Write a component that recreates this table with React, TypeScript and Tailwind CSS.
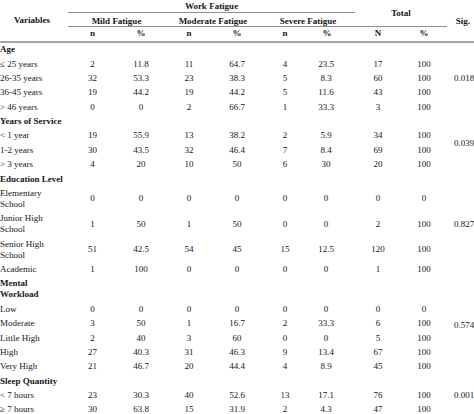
type Row = { label: string; v: string[] };
type Group = { title: string; sig: string; rows: Row[] };

const groups: Group[] = [
  {
    title: "Age",
    sig: "0.018",
    rows: [
      { label: "≤ 25 years", v: ["2", "11.8", "11", "64.7", "4", "23.5", "17", "100"] },
      { label: "26-35 years", v: ["32", "53.3", "23", "38.3", "5", "8.3", "60", "100"] },
      { label: "36-45 years", v: ["19", "44.2", "19", "44.2", "5", "11.6", "43", "100"] },
      { label: "> 46 years", v: ["0", "0", "2", "66.7", "1", "33.3", "3", "100"] },
    ],
  },
  {
    title: "Years of Service",
    sig: "0.039",
    rows: [
      { label: "< 1 year", v: ["19", "55.9", "13", "38.2", "2", "5.9", "34", "100"] },
      { label: "1-2 years", v: ["30", "43.5", "32", "46.4", "7", "8.4", "69", "100"] },
      { label: "> 3 years", v: ["4", "20", "10", "50", "6", "30", "20", "100"] },
    ],
  },
  {
    title: "Education Level",
    sig: "0.827",
    rows: [
      { label: "Elementary School", v: ["0", "0", "0", "0", "0", "0", "0", "0"] },
      { label: "Junior High School", v: ["1", "50", "1", "50", "0", "0", "2", "100"] },
      { label: "Senior High School", v: ["51", "42.5", "54", "45", "15", "12.5", "120", "100"] },
      { label: "Academic", v: ["1", "100", "0", "0", "0", "0", "1", "100"] },
    ],
  },
  {
    title: "Mental Workload",
    sig: "0.574",
    rows: [
      { label: "Low", v: ["0", "0", "0", "0", "0", "0", "0", "0"] },
      { label: "Moderate", v: ["3", "50", "1", "16.7", "2", "33.3", "6", "100"] },
      { label: "Little High", v: ["2", "40", "3", "60", "0", "0", "5", "100"] },
      { label: "High", v: ["27", "40.3", "31", "46.3", "9", "13.4", "67", "100"] },
      { label: "Very High", v: ["21", "46.7", "20", "44.4", "4", "8.9", "45", "100"] },
    ],
  },
  {
    title: "Sleep Quantity",
    sig: "0.001",
    rows: [
      { label: "< 7 hours", v: ["23", "30.3", "40", "52.6", "13", "17.1", "76", "100"] },
      { label: "≥ 7 hours", v: ["30", "63.8", "15", "31.9", "2", "4.3", "47", "100"] },
    ],
  },
];

const numCell = "py-[1.7px] leading-[11px] text-center align-middle font-normal";
const labelCell = "py-[1.7px] leading-[11px] text-left align-middle pr-[2px] pl-0";

function NumCells({ v }: { v: string[] }) {
  return (
    <>
      {v.map((x, i) => (
        <td key={i} className={i === 5 ? numCell + " pr-[12px]" : numCell}>
          {x}
        </td>
      ))}
    </>
  );
}

function EmptyCells() {
  return (
    <>
      {Array.from({ length: 8 }).map((_, i) => (
        <td key={i} className="py-[1.7px] leading-[11px]"></td>
      ))}
    </>
  );
}

export default function App() {
  const thin = "border-b border-[#8f8f8f]";
  const thick = "border-b-2 border-[#a6a6a6]";
  return (
    <div className="w-[474px] h-[414px] overflow-hidden bg-white text-[#161616] font-['Liberation_Serif','Times_New_Roman',serif] text-[9px]">
      <table className="table-fixed border-separate border-spacing-0 w-[479px]">
        <colgroup>
          <col className="w-[68px]" />
          <col className="w-[49px]" />
          <col className="w-[48px]" />
          <col className="w-[48px]" />
          <col className="w-[48px]" />
          <col className="w-[48px]" />
          <col className="w-[46px]" />
          <col className="w-[46px]" />
          <col className="w-[46px]" />
          <col className="w-[32px]" />
        </colgroup>
        <thead>
          <tr>
            <th rowSpan={3} className={`${thick} font-bold text-center align-middle leading-[10px] pr-[4px]`}>
              Variables
            </th>
            <th colSpan={6} className={`${thin} font-bold text-center leading-[10px] pt-[1px] pb-[1px]`}>
              Work Fatigue
            </th>
            <th colSpan={2} rowSpan={2} className={`${thin} font-bold text-center align-middle leading-[10px]`}>
              Total
            </th>
            <th rowSpan={3} className={`${thick} font-bold text-center align-middle leading-[10px] pt-[2px]`}>
              Sig.
            </th>
          </tr>
          <tr>
            <th colSpan={2} className={`${thin} font-bold text-center leading-[10px] pt-[3px]`}>
              Mild Fatigue
            </th>
            <th colSpan={2} className={`${thin} font-bold text-center leading-[10px] pt-[3px]`}>
              Moderate Fatigue
            </th>
            <th colSpan={2} className={`${thin} font-bold text-center leading-[10px] pt-[3px]`}>
              Severe Fatigue
            </th>
          </tr>
          <tr>
            {["n", "%", "n", "%", "n", "%", "N", "%"].map((h, i) => (
              <th
                key={i}
                className={`${thick} font-bold text-center leading-[10px] pt-[1px] pb-[2.5px] ${i === 5 ? "pr-[10px]" : ""}`}
              >
                {h}
              </th>
            ))}
          </tr>
        </thead>
        <tbody>
          {groups.map((g) => (
            <>
              <tr key={g.title}>
                <td className={`${labelCell} font-bold`}>{g.title}</td>
                <EmptyCells />
                <td rowSpan={g.rows.length + 1} className="text-center align-middle leading-[11px] whitespace-nowrap pl-[2px]">
                  {g.sig}
                </td>
              </tr>
              {g.rows.map((r) => (
                <tr key={g.title + r.label}>
                  <td className={labelCell}>{r.label}</td>
                  <NumCells v={r.v} />
                </tr>
              ))}
            </>
          ))}
        </tbody>
      </table>
    </div>
  );
}
